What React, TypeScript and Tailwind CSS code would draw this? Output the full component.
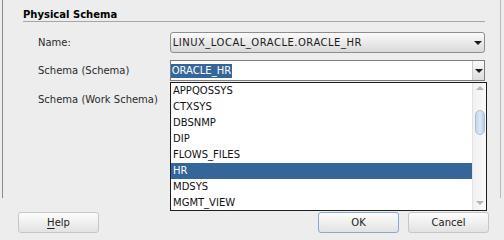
import type { ReactNode } from "react";

const schemas = [
  "APPQOSSYS",
  "CTXSYS",
  "DBSNMP",
  "DIP",
  "FLOWS_FILES",
  "HR",
  "MDSYS",
  "MGMT_VIEW",
];

function Caret({ color = "#1a1a1a", up = false }: { color?: string; up?: boolean }) {
  return (
    <svg width="8" height="4" viewBox="0 0 8 4" className="block">
      <path d={up ? "M0 4h8L4 0z" : "M0 0h8L4 4z"} fill={color} />
    </svg>
  );
}

function Row({ label, children, className = "" }: { label: string; children?: ReactNode; className?: string }) {
  return (
    <div className={`flex h-[21px] items-center pl-[15px] ${className}`}>
      <div className="w-[132px] text-[#2a2a2a]">{label}</div>
      {children}
    </div>
  );
}

function Button({ children, focused = false }: { children: ReactNode; focused?: boolean }) {
  return (
    <div
      className={`flex h-[21px] w-[81px] items-center justify-center rounded-[3px] border bg-gradient-to-b from-[#fdfdfd] to-[#e2e2e2] text-[#222] ${
        focused ? "border-[#8ba8cf]" : "border-[#c6c6c6]"
      }`}
    >
      {children}
    </div>
  );
}

export default function App() {
  return (
    <div className="relative h-[240px] w-[504px] overflow-hidden bg-[#ededed] font-['DejaVu_Sans',sans-serif] text-[10px] leading-[13px] text-[#222]">
      <div className="ml-[2px] h-[198px] w-[499px] border-l border-r border-l-[#8c8c8c] border-r-[#b8b8b8] pl-[20px] pr-[15px]">
        <div className="h-[22px] border-b border-[#a6a6a6] pt-[8px] font-bold text-black">
          Physical Schema
        </div>

        <div className="mt-[10px] flex flex-col">
          <Row label="Name:">
            <div className="flex h-[21px] w-[316px] items-center justify-between rounded-[3px] border border-[#8e8e8e] bg-gradient-to-b from-[#fbfbfb] to-[#d9d9d9] pl-[2px] pr-[2px]">
              <span className="tracking-[0.5px] text-[#1a1a1a]">LINUX_LOCAL_ORACLE.ORACLE_HR</span>
              <Caret />
            </div>
          </Row>

          <Row label="Schema (Schema)" className="mt-[7px]">
            <div className="flex h-[21px] w-[316px] border border-[#7d7d7d] bg-white">
              <div className="flex flex-1 items-center">
                <span className="bg-[#35669a] px-[1px] leading-[14px] text-white">ORACLE_HR</span>
              </div>
              <div className="flex w-[12px] items-center justify-center border-l border-[#c9c9c9] bg-gradient-to-b from-[#fafafa] to-[#dcdcdc]">
                <Caret />
              </div>
            </div>
          </Row>

          <Row label="Schema (Work Schema)" className="mt-[8px]">
            <div className="h-[21px] w-[316px] rounded-[3px] border border-[#8e8e8e] bg-white" />
          </Row>
        </div>
      </div>

      <div className="mt-[14px] flex pl-[18px] pr-[15px]">
        <Button>
          <span>
            <span className="underline underline-offset-[2px]">H</span>elp
          </span>
        </Button>
        <div className="flex-1" />
        <Button focused>OK</Button>
        <div className="w-[9px]" />
        <Button>Cancel</Button>
      </div>

      {/* open schema dropdown */}
      <div className="absolute left-[170px] top-[82px] flex h-[129px] w-[317px] border border-[#1e1e1e] bg-white">
        <div className="flex flex-1 flex-col overflow-hidden">
          {schemas.map((s) => (
            <div
              key={s}
              className={`h-[16px] shrink-0 pl-[2px] leading-[16px] ${
                s === "HR" ? "bg-[#35669a] text-white" : "text-[#111]"
              }`}
            >
              {s}
            </div>
          ))}
        </div>
        <div className="flex w-[14px] flex-col items-center border-l border-[#e2e2e2] bg-gradient-to-r from-[#f1f1f1] to-[#fafafa]">
          <div className="flex h-[10px] items-center">
            <Caret up color="#b4b4b4" />
          </div>
          <div className="mt-[17px] h-[25px] w-[10px] rounded-full border border-[#a9c0dc] bg-gradient-to-r from-[#c4d6ec] via-[#dce8f5] to-[#b9cee8]" />
          <div className="flex-1" />
          <div className="flex h-[14px] items-center">
            <Caret color="#b4b4b4" />
          </div>
        </div>
      </div>
    </div>
  );
}
